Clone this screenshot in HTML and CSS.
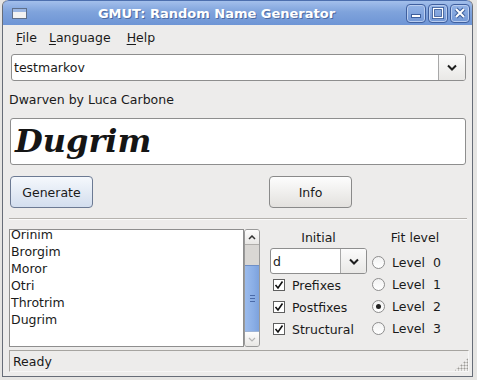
FILE: index.html
```html
<!DOCTYPE html>
<html lang="en">
<head>
  <meta charset="UTF-8">
  <title>GMUT: Random Name Generator</title>
  <link rel="stylesheet" href="styles.css">
</head>
<body>

<div class="window">
  <div class="titlebar">
    <span class="app-icon"></span>
    <span class="title">GMUT: Random Name Generator</span>
    <div class="wm-buttons">
      <span class="wm-btn">
        <svg width="12" height="12" viewBox="0 0 12 12"><rect x="1.5" y="7.5" width="9" height="3" fill="#fff" stroke="#3d5f9c" stroke-width="1"/></svg>
      </span>
      <span class="wm-btn">
        <svg width="12" height="12" viewBox="0 0 12 12"><rect x="1.5" y="1.5" width="9" height="9" fill="none" stroke="#3d5f9c" stroke-width="3"/><rect x="1.5" y="1.5" width="9" height="9" fill="none" stroke="#fff" stroke-width="1.2"/></svg>
      </span>
      <span class="wm-btn">
        <svg width="12" height="12" viewBox="0 0 12 12"><path d="M2 2 L10 10 M10 2 L2 10" stroke="#3d5f9c" stroke-width="4"/><path d="M2 2 L10 10 M10 2 L2 10" stroke="#fff" stroke-width="2"/></svg>
      </span>
    </div>
  </div>

  <div class="menubar">
    <span class="menu-item file"><u>F</u>ile</span>
    <span class="menu-item lang"><u>L</u>anguage</span>
    <span class="menu-item help"><u>H</u>elp</span>
  </div>

  <div class="content">
    <div class="combo wide">
      <span class="combo-text">testmarkov</span>
      <span class="combo-arrow">
        <svg width="10" height="7" viewBox="0 0 10 7"><polyline points="1,1.5 5,5.5 9,1.5" fill="none" stroke="#1e1e1e" stroke-width="2"/></svg>
      </span>
    </div>

    <div class="author">Dwarven by Luca Carbone</div>

    <div class="name-box">Dugrim</div>

    <div class="button-row">
      <button type="button" class="btn focused">Generate</button>
      <button type="button" class="btn info">Info</button>
    </div>

    <div class="separator"></div>

    <div class="lower">
      <div class="list">
        <ul class="names">
          <li>Orinim</li>
          <li>Brorgim</li>
          <li>Moror</li>
          <li>Otri</li>
          <li>Throtrim</li>
          <li>Dugrim</li>
        </ul>
        <div class="scrollbar">
          <span class="step up">
            <svg width="8" height="5" viewBox="0 0 8 5"><polyline points="1,4 4,1 7,4" fill="none" stroke="#333" stroke-width="1.5"/></svg>
          </span>
          <span class="trough">
            <span class="thumb"><span class="grip"></span></span>
          </span>
          <span class="step down">
            <svg width="8" height="5" viewBox="0 0 8 5"><polyline points="1,1 4,4 7,1" fill="none" stroke="#b5b5b5" stroke-width="1.2"/></svg>
          </span>
        </div>
      </div>

      <div class="options">
        <div class="col initial">
          <div class="col-title">Initial</div>
          <div class="combo small">
            <span class="combo-text">d</span>
            <span class="combo-arrow">
              <svg width="10" height="7" viewBox="0 0 10 7"><polyline points="1,1.5 5,5.5 9,1.5" fill="none" stroke="#1e1e1e" stroke-width="2"/></svg>
            </span>
          </div>
          <div class="check-row"><span class="checkbox"><svg width="10" height="10" viewBox="0 0 10 10"><polyline points="1.5,5 4,8 8.5,1.5" fill="none" stroke="#111" stroke-width="1.6"/></svg></span>Prefixes</div>
          <div class="check-row"><span class="checkbox"><svg width="10" height="10" viewBox="0 0 10 10"><polyline points="1.5,5 4,8 8.5,1.5" fill="none" stroke="#111" stroke-width="1.6"/></svg></span>Postfixes</div>
          <div class="check-row"><span class="checkbox"><svg width="10" height="10" viewBox="0 0 10 10"><polyline points="1.5,5 4,8 8.5,1.5" fill="none" stroke="#111" stroke-width="1.6"/></svg></span>Structural</div>
        </div>
        <div class="col fit">
          <div class="col-title">Fit level</div>
          <div class="radios">
            <div class="radio-row"><span class="radio"></span>Level  0</div>
            <div class="radio-row"><span class="radio"></span>Level  1</div>
            <div class="radio-row"><span class="radio checked"></span>Level  2</div>
            <div class="radio-row"><span class="radio"></span>Level  3</div>
          </div>
        </div>
      </div>
    </div>
  </div>

  <div class="statusbar">
    <div class="status">Ready</div>
    <span class="resize-grip"></span>
  </div>
</div>

</body>
</html>
```

FILE: styles.css
```css
* {
  box-sizing: border-box;
}

body {
  margin: 0;
  padding: 0;
  background-color: #e6e5e3;
  font-family: "DejaVu Sans", "Liberation Sans", sans-serif;
  font-size: 12.5px;
  color: #1a1a1a;
}

.window {
  width: 471px;
  height: 377px;
  margin-left: 2px;
  background-color: #edeceb;
  border: 1px solid #676d78;
  border-top: none;
  border-radius: 6px 6px 0 0;
  display: flex;
  flex-direction: column;
  overflow: hidden;
}

/* title bar */
.titlebar {
  height: 25px;
  flex: none;
  display: flex;
  align-items: center;
  padding: 0 2px 0 9px;
  background: linear-gradient(#a3bfeb, #7fa3dc 45%, #6e95d5);
  border-top: 1px solid #4d6fae;
  border-radius: 6px 6px 0 0;
}

.app-icon {
  width: 15px;
  height: 11px;
  margin-top: 1px;
  border: 1px solid #5f6f89;
  background: linear-gradient(#9bb6e2 0, #9bb6e2 3px, #f2f2f2 3px);
}

.title {
  flex: 1;
  text-align: center;
  color: #fff;
  font-weight: bold;
  font-size: 13px;
  text-shadow: 1px 1px 0 rgba(40, 60, 110, 0.55);
  margin-top: 1px;
}

.wm-buttons {
  display: flex;
  gap: 2px;
}

.wm-btn {
  width: 20px;
  height: 19px;
  display: flex;
  align-items: center;
  justify-content: center;
  border: 1px solid #3f5f9e;
  border-radius: 4px;
  background: linear-gradient(#93b3e6, #7398d6);
  box-shadow: inset 0 0 0 1px #b9cdef;
}

/* menu */
.menubar {
  height: 24px;
  flex: none;
  display: flex;
  align-items: center;
  padding-left: 13px;
}

.menu-item u {
  text-decoration: underline;
  text-underline-offset: 2px;
}

.lang {
  margin-left: 12px;
}

.help {
  margin-left: 16px;
}

.content {
  padding: 0 6px 0 7px;
}

/* combo boxes */
.combo {
  display: flex;
  height: 27px;
  border: 1px solid #8e8e8e;
  border-radius: 3px;
  background-color: #fff;
  overflow: hidden;
}

.combo.wide {
  margin-top: 5px;
  margin-left: 1px;
}

.combo-text {
  flex: 1;
  display: flex;
  align-items: center;
  padding-left: 2px;
}

.combo-arrow {
  width: 27px;
  display: flex;
  align-items: center;
  justify-content: center;
  border-left: 1px solid #a8a8a8;
  background: linear-gradient(#fbfbfb, #e9e8e6);
}

.combo.small {
  height: 26px;
  margin-top: 2px;
}

.combo.small .combo-arrow {
  width: 26px;
}

.author {
  margin-top: 10px;
  margin-left: -1px;
  line-height: 17px;
}

.name-box {
  margin-top: 10px;
  height: 47px;
  border: 1px solid #8e8e8e;
  border-radius: 3px;
  background-color: #fff;
  font-family: "DejaVu Serif", serif;
  font-weight: bold;
  font-style: italic;
  font-size: 32px;
  line-height: 44px;
  padding-left: 4px;
  color: #151515;
}

/* buttons */
.button-row {
  display: flex;
  gap: 176px;
  margin-top: 11px;
}

.btn {
  width: 83px;
  height: 32px;
  border: 1px solid #8a8a8a;
  border-radius: 4px;
  background: linear-gradient(#fdfdfd, #e3e1de);
  font-family: inherit;
  font-size: 12.5px;
  color: #1a1a1a;
  padding: 0;
}

.btn.focused {
  border-color: #6c7a93;
  background: linear-gradient(#f5f8fc, #d3deee);
}

.separator {
  margin: 10px -1px 0 -1px;
  height: 2px;
  border-top: 1px solid #b5b2ae;
  border-bottom: 1px solid #fafafa;
}

/* lower part */
.lower {
  display: flex;
  margin-top: 9px;
  margin-left: -1px;
}

.list {
  display: flex;
  width: 251px;
  height: 118px;
}

.names {
  list-style: none;
  margin: 0;
  padding: 0 0 0 1px;
  width: 235px;
  border: 1px solid #8e8e8e;
  background-color: #fff;
  overflow: hidden;
}

.names li {
  line-height: 17px;
}

.names li:first-child {
  margin-top: -4px;
}

.scrollbar {
  width: 16px;
  display: flex;
  flex-direction: column;
  border: 1px solid #9a9a9a;
  border-radius: 3px;
  overflow: hidden;
  background-color: #d9d7d4;
}

.step {
  height: 15px;
  flex: none;
  display: flex;
  align-items: center;
  justify-content: center;
  background: linear-gradient(#fdfdfd, #e8e7e5);
}

.step.up {
  border-bottom: 1px solid #b0aeab;
}

.step.down {
  border-top: 1px solid #9fb4d6;
}

.trough {
  flex: 1;
  display: flex;
  flex-direction: column;
  padding-top: 20px;
}

.thumb {
  flex: 1;
  display: flex;
  align-items: center;
  justify-content: center;
  background: linear-gradient(90deg, #9bbbec, #8aaee6 60%, #7da2dd);
  border-top: 1px solid #6e8fc7;
}

.grip {
  width: 5px;
  height: 7px;
  background: repeating-linear-gradient(#4a6aa8 0, #4a6aa8 1px, transparent 1px, transparent 3px);
}

.options {
  display: flex;
  margin-left: 10px;
}

.col-title {
  text-align: center;
  line-height: 17px;
}

.initial {
  width: 97px;
}

.check-row {
  height: 22px;
  display: flex;
  align-items: center;
  padding-left: 3px;
}

.check-row:first-of-type {
  margin-top: 3px;
}

.checkbox {
  width: 12px;
  height: 12px;
  margin-right: 7px;
  border: 1px solid #5f5f5f;
  background-color: #fff;
  display: flex;
  align-items: center;
  justify-content: center;
}

.fit {
  margin-left: 5px;
  width: 86px;
}

.radios {
  margin-top: 5px;
}

.radio-row {
  height: 22px;
  display: flex;
  align-items: center;
  white-space: pre;
}

.radio {
  width: 13px;
  height: 13px;
  margin-right: 7px;
  border: 1px solid #8d8d8d;
  border-radius: 50%;
  background: linear-gradient(#f2f2f2, #fff);
  display: flex;
  align-items: center;
  justify-content: center;
}

.radio.checked::after {
  content: "";
  width: 5px;
  height: 5px;
  border-radius: 50%;
  background-color: #222;
}

/* status bar */
.statusbar {
  margin: 3px 3px 0 6px;
  height: 22px;
  display: flex;
  border: 1px solid #a6a4a0;
  border-right-color: #f6f6f6;
  border-bottom-color: #f6f6f6;
}

.status {
  flex: 1;
  display: flex;
  align-items: center;
  padding-left: 3px;
}

.resize-grip {
  width: 14px;
  align-self: flex-end;
  height: 13px;
  background-image: radial-gradient(circle, #9d9b97 0.8px, transparent 1.2px);
  background-size: 3px 3px;
  clip-path: polygon(100% 0, 100% 100%, 0 100%);
}
```
